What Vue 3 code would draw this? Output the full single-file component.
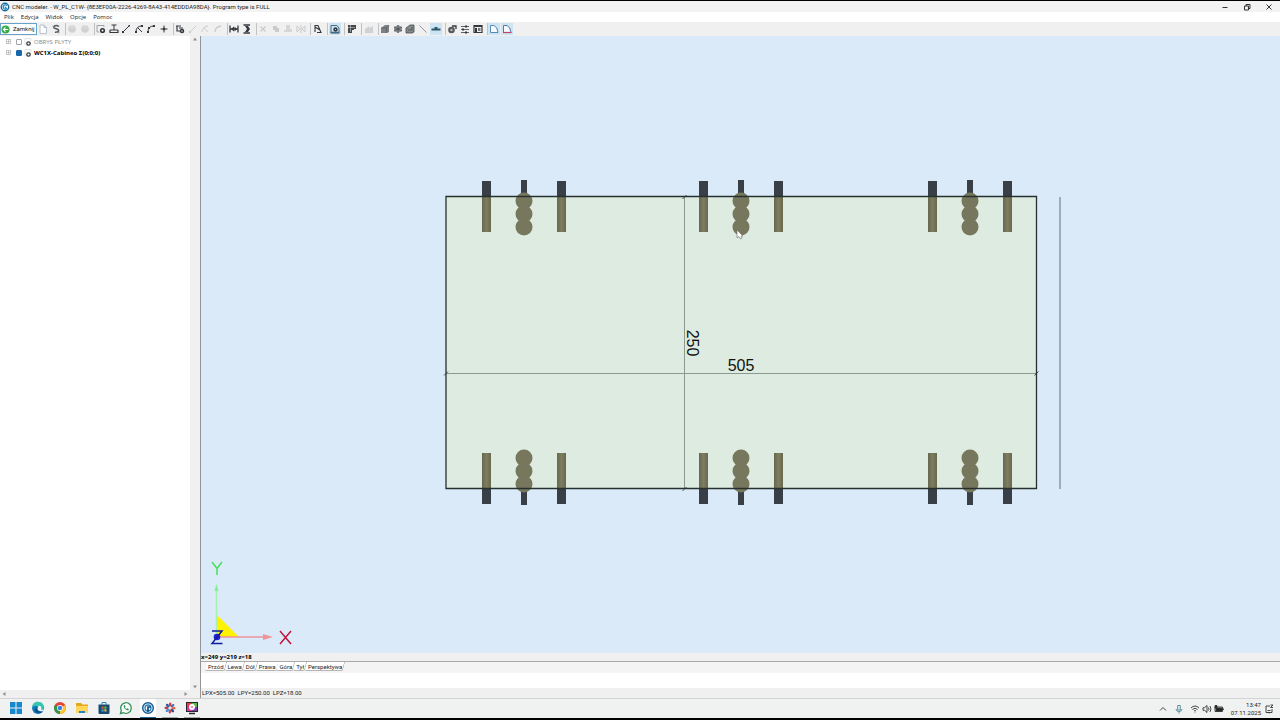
<script setup>
import { ref } from 'vue'

const menus = ['Plik', 'Edycja', 'Widok', 'Opcje', 'Pomoc']
const k = '#34383c'
const g = '#c9cbcc'
const line = (d, c = k, w = 1) => `<path d="${d}" fill="none" stroke="${c}" stroke-width="${w}"/>`
const fill = (d, c = k) => `<path d="${d}" fill="${c}"/>`
const gear = (x, y, r = 1.8) => `<circle cx="${x}" cy="${y}" r="${r}" fill="none" stroke="${k}" stroke-width="1.6"/>`
const solid = 'M2 5L6 2H10V9L8 10H2Z'

const groups = [
  [
    { name: 'Nowy', art: fill('M3 2H7L9.500 4.500V10.500H3Z', '#fcfdfe') + line('M3 2H7L9.500 4.500V10.500H3ZM7 2V4.500H9.500', '#a9b6c2', 0.8) },
    { name: 'Przelicz', art: line('M9 3.500C6 1.500 3 3 4 5L8 6.500C10 8 7 10 5 9', '#555b60', 1.5) + line('M2.500 3L5 5M6 9L9.500 10', '#888', 1) }
  ],
  [
    { name: 'Cofnij', art: '<circle cx="6" cy="6" r="3.800" fill="#cfd1d2"/><path d="M4 5Q6 2 8 5" fill="none" stroke="#e3e4e4"/>' },
    { name: 'Ponów', art: '<circle cx="6" cy="6" r="3.800" fill="#cfd1d2"/><path d="M4 5Q6 2 8 5" fill="none" stroke="#e3e4e4"/>' }
  ],
  [
    { name: 'Element', art: line('M2 9V2.500H9V4M2 9H4', '#8c9196', 0.8) + gear(7.5, 7.5) },
    { name: 'Wymiar', art: line('M3.500 2H8.500M6 2V7') + line('M2 7V9.500H10V7M2 7H10', k, 1.2) },
    { name: 'Linia', art: line('M3 9L9.500 2.500') + fill('M2 8H4V10H2ZM8.500 2H10V3.500H8.500Z') },
    { name: 'Łuk', art: line('M3 9Q3 3 9 3M5 5L9 9') + fill('M2 8H4V10H2ZM8 2H10V4H8Z') },
    { name: 'Zaokrąglenie', art: line('M3 9Q3 3 9 3') + fill('M2 8H4V10H2ZM8 2H10V4H8ZM3 4H5V6H3Z') },
    { name: 'Punkt', art: line('M6 2.500V9.500M2.500 6H9.500') + fill('M4.800 4.800H7.200V7.200H4.800Z') }
  ],
  [
    { name: 'Edytuj element', art: line('M2 3H7M3 3V8H6M5 5H9', k, 1.2) + gear(8, 8, 1.5) },
    { name: 'Edytuj linię', art: line('M3 9L9 3', g) + fill('M2 8H4V10H2Z', g) },
    { name: 'Edytuj łuk', art: line('M3 9Q3 4 9 3M5 5L9 9', g) },
    { name: 'Edytuj promień', art: line('M3 9Q3 4 9 3', g, 1.3) }
  ],
  [
    { name: 'Wymiar poziomy', art: line('M2 2.500V9.500M10 2.500V9.500M2 6H10', k, 1.3) + fill('M3 6L6 3.500V8.500ZM9 6L6.500 3.500V8.500Z') },
    { name: 'Wymiar pionowy', art: line('M2.500 2H9M2.500 10H9', k, 1.3) + fill('M4 3H7L9 6L7 9H4L6 6Z') }
  ],
  [
    { name: 'Usuń', art: line('M3.500 3.500L8.500 8.500M8.500 3.500L3.500 8.500', g, 1.2) },
    { name: 'Kopiuj', art: fill('M3 3H7V5H9V9H5V7H3Z', g) },
    { name: 'Wklej', art: fill('M4 2H8V6H10V9H2V7H4Z', '#d5d6d7') },
    { name: 'Odbij', art: line('M2 3V9L5 6ZM10 3V9L7 6ZM6 2V10', g) }
  ],
  [{ name: 'Obrót', art: line('M3 9V2.500H6L9 9.500H5M3 4L8 7', k, 1.1) }],
  [{ name: 'Zrzut', on: true, art: line('M2 10V2.500H8L10 5V10Z', '#486b87') + gear(6.5, 6.5, 1.4) + line('M1.500 9.500H10.500', '#486b87', 1.5) }],
  [{ name: 'Lista', art: fill('M2 2H10V6H8V7H6V10H2Z', '#44484b') + line('M2 4.500H9M4.500 2V9', '#c4c7c8', 0.6) }],
  [{ name: 'Blok', art: fill('M2 6L6 3V5L10 3V10H2Z', '#cfd1d2') }],
  [
    { name: 'Bryła', art: fill(solid, '#7d8286') + line('M2 5H7.500V10M7.500 5L10 2.500', '#5a5e62', 0.8) },
    { name: 'Siatka', art: fill('M2 4L6 2L10 4V8L6 10L2 8Z', '#8e9295') + line('M2 4L10 8M2 8L10 4M6 2V10', '#4a4e52', 0.8) },
    { name: 'Bryła i krawędzie', art: fill(solid, '#858a8d') + line('M2 5L6 2H10V9L8 10H2ZM4 7H8V4', '#45494c', 0.8) },
    { name: 'Odcinek', art: line('M2.500 2.500L9.500 9.500', '#8b8f92', 0.9) },
    { name: 'Przekrój', on: true, art: line('M1.500 6.500H10.500', '#31566c', 2) + fill('M4.500 4H7.500V7H4.500Z', '#31566c') }
  ],
  [
    { name: 'Widoczność', art: '<circle cx="5.500" cy="7" r="3.300" fill="#54585b"/><circle cx="5.500" cy="7" r="1.200" fill="#bbb"/>' + line('M6 3H10V6', k, 1.3) },
    { name: 'Ustawienia', art: line('M2 3.500H10M2 6.500H10M2 9.500H10', '#4e5255', 0.9) + fill('M6 2.500H8V4.500H6ZM3 5.500H5V7.500H3ZM6 8.500H8V10.500H6Z') },
    { name: 'Okno', art: line('M2 2.500H10V9.500H2Z', k, 1.2) + fill('M2 2H10V4H2ZM3 5H5V9H3Z') + fill('M6 5H8.500V8H6Z', '#777') }
  ],
  [
    { name: 'Profil', on: true, art: fill('M2.500 9.500V2.500H7L10 9.500Z', '#f4fafd') + line('M2.500 9.500V2.500H6Q9.500 4 10 9.500Z', '#5689b4') },
    { name: 'Profil bazowy', on: true, art: fill('M2.500 9.500V2.500H7L10 9.500Z', '#f4fafd') + line('M2.500 9.500V2.500H6Q9.500 4 10 9.500', '#5a7b9b') + line('M2 9.500H10.500', '#c04463', 1.2) }
  ]
]
const groupWidth = (n) => `${Math.ceil(n * 12.5)}px`

const tree = ref([
  { label: 'OBRYS PŁYTY', checked: false },
  { label: 'WC1X-Cabineo Σ(0;0;0)', checked: true }
])

const connectors = [524, 741, 970]
const views = ['Przód', 'Lewa', 'Dół', 'Prawa', 'Góra', 'Tył', 'Perspektywa']
const petals = Array.from({ length: 8 }, (_, i) => ({
  angle: i * 45,
  color: ['#d83b3b', '#3874bf', '#e0694f', '#2a4d89', '#d13e59', '#4a93cd', '#b73b4a', '#335b9d'][i]
}))
</script>

<template>
  <div class="app">
    <header class="titlebar">
      <svg class="logo" viewBox="0 0 12 12" aria-hidden="true">
        <circle cx="6" cy="6" r="4.500" fill="#e9f5fb" stroke="#1b6796" stroke-width="1.600" />
        <path d="M8.500 4.500A2.500 2.500 0 1 0 8 8L6 6" fill="none" stroke="#2b8dbf" stroke-width="1.500" />
      </svg>
      <h1>CNC modeler. - W_PL_C1W- {8E3EF00A-2226-4269-8A43-414EDDDA98DA}. Program type is FULL</h1>
      <div class="window-buttons">
        <button aria-label="Minimalizuj"><svg viewBox="0 0 10 10"><path d="M2.500 5.500H7.500" /></svg></button>
        <button aria-label="Przywróć"><svg viewBox="0 0 10 10"><path d="M2.500 4H6.500V8H2.500ZM4 4V2.500H8V6.500H6.500" /></svg></button>
        <button aria-label="Zamknij okno"><svg viewBox="0 0 10 10"><path d="M2.500 2.500L7.500 7.500M7.500 2.500L2.500 7.500" /></svg></button>
      </div>
    </header>

    <nav class="menubar">
      <button v-for="m in menus" :key="m">{{ m }}</button>
    </nav>

    <div class="toolbar">
      <button class="close-button">
        <svg viewBox="0 0 10 10" aria-hidden="true">
          <circle cx="5" cy="5" r="4.500" fill="#36a844" />
          <path d="M8 5H3M5 2.700L2.700 5L5 7.300" fill="none" stroke="#fff" stroke-width="1.300" />
        </svg>
        <span>Zamknij</span>
      </button>
      <div v-for="(group, i) in groups" :key="i" class="tool-group" :style="{ width: groupWidth(group.length) }">
        <button v-for="t in group" :key="t.name" :aria-label="t.name" :class="{ on: t.on }">
          <svg viewBox="0 0 12 12" v-html="t.art"></svg>
        </button>
      </div>
    </div>

    <main class="workspace">
      <aside class="side">
        <div class="side-body">
          <ul class="tree">
            <li v-for="(n, i) in tree" :key="i">
              <button class="expander" :aria-label="'Rozwiń ' + n.label">
                <svg viewBox="0 0 6 6"><path d="M.5 .5H5.500V5.500H.5ZM1.500 3H4.500M3 1.500V4.500" /></svg>
              </button>
              <label :class="{ dim: !n.checked }">
                <input v-model="n.checked" type="checkbox" />
                <svg class="node-icon" viewBox="0 0 10 10" aria-hidden="true">
                  <path d="M2 8V1.500H8V4" fill="none" stroke="#e1e3e5" />
                  <circle cx="5.500" cy="6.500" r="1.700" fill="none" stroke="#383c40" stroke-width="1.300" />
                </svg>
                <span>{{ n.label }}</span>
              </label>
            </li>
          </ul>
          <div class="vscroll">
            <svg viewBox="0 0 6 6"><path d="M1 4.500L3 1.500L5 4.500Z" /></svg>
            <svg viewBox="0 0 6 6"><path d="M1 1.500L3 4.500L5 1.500Z" /></svg>
          </div>
        </div>
        <div class="hscroll">
          <svg viewBox="0 0 6 6"><path d="M4.500 1L1.500 3L4.500 5Z" /></svg>
          <svg viewBox="0 0 6 6"><path d="M1.500 1L4.500 3L1.500 5Z" /></svg>
        </div>
      </aside>

      <section class="viewer">
        <div class="canvas">
          <svg viewBox="201 36 1079 617">
            <defs>
              <linearGradient id="dowel">
                <stop offset="0" stop-color="#66684f" />
                <stop offset=".5" stop-color="#7e7d60" />
                <stop offset="1" stop-color="#68684f" />
              </linearGradient>
              <g id="fitting">
                <path d="M-42 181h9v16h-9zM33 181h9v16h-9zM-3 180h6v17h-6z" fill="#393f47" />
                <rect x="-42" y="197" width="9" height="35" fill="url(#dowel)" />
                <rect x="33" y="197" width="9" height="35" fill="url(#dowel)" />
                <g fill="#77775e">
                  <circle cy="201" r="8.500" />
                  <circle cy="214" r="8.500" />
                  <circle cy="227" r="8.500" />
                </g>
              </g>
            </defs>
            <rect x="446" y="197" width="590.500" height="292" fill="#deebe0" />
            <g stroke="#8b9990" fill="none">
              <path d="M684.500 197V489M446 373.500H1036" />
              <path d="M682.500 199L686.500 195M682.500 491L686.500 487M444 375.500L448 371.500M1034.500 375.500L1038.500 371.500" stroke="#46504a" />
            </g>
            <g v-for="x in connectors" :key="x">
              <use href="#fitting" :transform="`translate(${x} 0)`" />
              <use href="#fitting" :transform="`translate(${x} 685) scale(1 -1)`" />
            </g>
            <path d="M446 196.500H1036.500V488.500H446Z" fill="none" stroke="#26312f" stroke-width="1.300" />
            <path d="M1060 197V489" stroke="#7e8b96" stroke-width="1.300" />
            <g font-size="16" fill="#111" text-anchor="middle">
              <text x="741" y="371">505</text>
              <text transform="translate(687 343) rotate(90)">250</text>
            </g>
            <path d="M737 230V238L739 236.500L740.500 239L742 238L741 236H743Z" fill="#fff" stroke="#777" stroke-width=".7" />
            <g stroke-width="1.500" fill="none">
              <path d="M217 615V637H239Z" fill="#fff200" />
              <path d="M216.500 637V588" stroke="#a8efb4" />
              <path d="M214.500 591L216.500 584L218.500 591Z" fill="#82ef93" />
              <path d="M217 637H265" stroke="#ee929c" />
              <path d="M263 634L273 637L263 640Z" fill="#f0939c" />
              <path d="M212 562L217 568.500L222 562M217 568.500V575" stroke="#46e057" />
              <path d="M280 631L291 644M291 631L280 644" stroke="#c0143c" />
              <circle cx="217" cy="637" r="3.300" fill="#2323d5" />
              <path d="M212 631H222L212 643.500H222.500" stroke="#101c9a" />
            </g>
          </svg>
        </div>
        <output class="coords">x=249 y=219 z=18</output>
        <nav class="views">
          <button v-for="v in views" :key="v">{{ v }}</button>
        </nav>
        <div class="blank"></div>
        <footer class="status"><span>LPX=505.00</span><span>LPY=250.00</span><span>LPZ=18.00</span></footer>
      </section>
    </main>

    <footer class="taskbar">
      <div class="apps">
        <button aria-label="Start"><svg viewBox="0 0 16 16"><path d="M2 2H7.500V7.500H2ZM8.500 2H14V7.500H8.500ZM2 8.500H7.500V14H2ZM8.500 8.500H14V14H8.500Z" fill="#1688cd" /></svg></button>
        <button aria-label="Edge">
          <svg viewBox="0 0 16 16">
            <circle cx="8" cy="8" r="6" fill="#1475b8" />
            <path d="M2 8C2 3 6 1 9 2C13 2 15 7 13 9H8C9 6 5 4 2 8Z" fill="#3ac5b2" />
            <path d="M7 8C7 12 11 12 13 11C10 15 4 13 5 9Z" fill="#0c4f91" />
            <path d="M7.500 8.500C9 6 8 5.500 10 6Q12 7 11 9.500H14L13 11Q8 12 7.500 8.500Z" fill="#eef7fa" />
          </svg>
        </button>
        <button aria-label="Chrome">
          <svg viewBox="0 0 16 16">
            <circle cx="8" cy="8" r="6" fill="#e54335" />
            <path d="M8 8L2.800 5A6 6 0 0 0 8 14L11 9Z" fill="#29974e" />
            <path d="M8 8L13.200 5A6 6 0 0 1 8 14Z" fill="#fac52d" />
            <circle cx="8" cy="8" r="2.900" fill="#fff" />
            <circle cx="8" cy="8" r="2.200" fill="#397ee0" />
          </svg>
        </button>
        <button aria-label="Pliki"><svg viewBox="0 0 16 16"><path d="M2 3H7L8.500 4.500H14V13H2Z" fill="#e2a91c" /><path d="M2 6H14V13H2Z" fill="#ffd65c" /><path d="M5 11H11V13H5Z" fill="#2484ca" /></svg></button>
        <button aria-label="Sklep">
          <svg viewBox="0 0 16 16">
            <path d="M6 4.500V2.500H10V4.500" fill="none" stroke="#2586c3" />
            <path d="M2.500 4.500H13.500V13Q13.500 14 12.500 14H3.500Q2.500 14 2.500 13Z" fill="#174a73" />
            <path d="M5.500 6.500H7.700V8.700H5.500Z" fill="#e55c3c" /><path d="M8.300 6.500H10.500V8.700H8.300Z" fill="#72b33d" />
            <path d="M5.500 9.300H7.700V11.500H5.500Z" fill="#35a1dc" /><path d="M8.300 9.300H10.500V11.500H8.300Z" fill="#eeb632" />
          </svg>
        </button>
        <button aria-label="WhatsApp">
          <svg viewBox="0 0 16 16">
            <path d="M2.500 13.500L3.300 10.500A5.300 5.300 0 1 1 5.500 12.700Z" fill="#f8fcf9" stroke="#32905a" stroke-width="1.300" />
            <path d="M5.700 5.500Q5.500 9.500 10.300 10.500L10.800 9L9.200 8.200L8.500 8.900Q7.200 8.300 6.900 7.200L7.500 6.600L6.900 5.100Z" fill="#32905a" />
          </svg>
        </button>
        <button class="current" aria-label="CNC modeler">
          <svg viewBox="0 0 16 16">
            <circle cx="8" cy="8" r="5.300" fill="#fff" stroke="#165d91" stroke-width="1.500" />
            <circle cx="8" cy="8" r="3" fill="none" stroke="#2685b8" stroke-width="1.300" />
            <path d="M8 12V7H11" fill="none" stroke="#164d80" stroke-width="1.700" />
          </svg>
        </button>
        <button class="running" aria-label="Projekt">
          <svg viewBox="0 0 16 16">
            <path v-for="p in petals" :key="p.angle" d="M8 7Q5.500 4.500 8 2.200Q11 3.500 8 7Z" :fill="p.color" :transform="`rotate(${p.angle} 8 8)`" />
          </svg>
        </button>
        <button class="running" aria-label="Nagrywanie">
          <svg viewBox="0 0 16 16">
            <path d="M2 2H14V12H2Z" fill="#272532" />
            <path d="M3 3H8V7H3Z" fill="#e93a45" /><path d="M8 3H13V7H8Z" fill="#55bd4b" />
            <path d="M8 7H13V11H8Z" fill="#7b3cac" /><path d="M3 7H8V11H3Z" fill="#e934a0" />
            <circle cx="8" cy="7" r="3" fill="#fff" /><circle cx="8" cy="7" r="1.300" fill="#ef93b5" />
            <path d="M5 13.500H11" stroke="#282831" stroke-width="1.500" />
          </svg>
        </button>
      </div>
      <div class="tray">
        <svg viewBox="0 0 12 12"><path d="M3 7.500L6 4.500L9 7.500" /></svg>
        <svg viewBox="0 0 12 12" class="mic"><path d="M4.700 2.500H7.300V7H4.700ZM3 6Q3 8.500 6 8.500Q9 8.500 9 6M6 8.500V10.500" /></svg>
        <div class="tray-set">
          <svg viewBox="0 0 12 12"><path d="M2 5Q6 1 10 5M3.500 6.500Q6 4 8.500 6.500M5 8Q6 7 7 8M6 9V9.500" /></svg>
          <svg viewBox="0 0 12 12"><path d="M2 4.700H3.500L6 2.500V9.500L3.500 7.300H2ZM7.500 4.500Q8.500 6 7.500 7.500M9 3Q11 6 9 9" /></svg>
          <svg viewBox="0 0 12 12"><path d="M2 4H9.500V8.500H2ZM10.500 5.500V7" /><path d="M3 5H9V8H3ZM2 2.500H4V5H2Z" fill="#222" /></svg>
        </div>
        <div class="clock">
          <time><span>13:47</span><span>07.11.2025</span></time>
          <svg viewBox="0 0 12 12"><path d="M7 3H3V9.500H9V6M4.500 7.500H7.500M7.500 2H10L7.500 4.500H10M6 9.500V10.500" /></svg>
        </div>
      </div>
    </footer>
  </div>
</template>

<style>
html,
body {
  height: 100%;
}
body {
  margin: 0;
}
#app {
  height: 100%;
}
</style>

<style scoped>
.app {
  box-sizing: border-box;
  height: 100%;
  display: flex;
  flex-direction: column;
  border-top: 1px solid #000;
  border-bottom: 2px solid #000;
  background: #f0f0f0;
  color: #222;
  font: 6px/10px "Open Sans", "Noto Sans", sans-serif;
  overflow: hidden;
}
button {
  margin: 0;
  padding: 0;
  border: 0;
  background: none;
  color: inherit;
  font: inherit;
}
svg {
  display: block;
  flex: none;
}
.titlebar {
  flex: none;
  display: flex;
  align-items: center;
  height: 11px;
  background: #f3f3f3;
}
.logo {
  width: 10px;
  height: 10px;
  margin: 0 2px 0 0;
}
h1 {
  flex: 1;
  margin: 0;
  font: 6px/10px Roboto, sans-serif;
  white-space: nowrap;
}
.window-buttons {
  display: flex;
}
.window-buttons button {
  width: 22px;
  display: flex;
  justify-content: center;
}
.window-buttons svg {
  width: 10px;
  height: 10px;
  fill: none;
  stroke: #333;
}
.menubar {
  flex: none;
  display: flex;
  gap: 7px;
  height: 10px;
  padding-left: 4px;
  background: #fff;
}
.toolbar {
  flex: none;
  display: flex;
  align-items: center;
  height: 14px;
  background: #f0f0f0;
}
.close-button {
  box-sizing: border-box;
  width: 37px;
  height: 12px;
  display: flex;
  align-items: center;
  gap: 3px;
  border: 1px solid #6aa3c9;
  background: #fbfdfe;
  font-family: Roboto, sans-serif;
}
.close-button svg {
  width: 9px;
  height: 9px;
}
.tool-group {
  display: flex;
  justify-content: space-around;
  padding-right: 3px;
  border-right: 1px solid #c2c2c2;
}
.tool-group:last-child {
  border: 0;
}
.tool-group svg {
  width: 12px;
  height: 12px;
}
.on {
  background: #cde4f3;
}
.workspace {
  flex: 1;
  min-height: 0;
  display: flex;
}
.side {
  flex: none;
  width: 200px;
  display: flex;
  flex-direction: column;
  border-right: 1px solid #92969a;
}
.side-body {
  flex: 1;
  display: flex;
}
.tree {
  flex: 1;
  margin: 0;
  padding: 0 0 0 6px;
  list-style: none;
  background: #fff;
  font-weight: bold;
}
.tree li,
.tree label {
  display: flex;
  align-items: center;
}
.tree li {
  height: 11px;
  gap: 5px;
}
.expander svg {
  width: 5px;
  height: 5px;
  fill: none;
  stroke: #a0a0a0;
  stroke-width: 0.8;
}
.tree input {
  appearance: none;
  box-sizing: border-box;
  width: 6px;
  height: 6px;
  margin: 0;
  border: 1px solid #a0a4a8;
  border-radius: 1px;
  background: #fff;
}
.tree input:checked {
  border-color: #1767ad;
  background: #1767ad;
}
.node-icon {
  width: 10px;
  height: 10px;
  margin: 0 1px;
}
.tree label {
  color: #000;
}
.tree label.dim {
  color: #888;
  font-weight: normal;
}
.vscroll,
.hscroll {
  flex: none;
  display: flex;
  justify-content: space-between;
  align-items: center;
  background: #f0f0f0;
}
.vscroll {
  width: 10px;
  flex-direction: column;
}
.hscroll {
  height: 8px;
  padding: 0 11px 0 1px;
}
.vscroll svg,
.hscroll svg {
  width: 6px;
  height: 6px;
  fill: #929292;
}
.viewer {
  flex: 1;
  min-width: 0;
  display: flex;
  flex-direction: column;
}
.canvas {
  flex: 1;
  min-height: 0;
  background: #daeaf8;
}
.canvas svg {
  width: 100%;
  height: 100%;
  font-family: "Liberation Sans", Arial, sans-serif;
}
.coords {
  flex: none;
  height: 8px;
  border-bottom: 1px solid #aaa;
  background: #f0f0f0;
  color: #000;
  font-weight: bold;
  line-height: 8px;
}
.views {
  flex: none;
  display: flex;
  height: 11px;
  padding-left: 5px;
  background: #f4f4f4;
}
.views button {
  position: relative;
  z-index: 0;
  height: 9px;
  padding: 0 2px;
  font-family: Roboto, sans-serif;
  line-height: 8px;
}
.views button::before {
  content: "";
  position: absolute;
  z-index: -1;
  inset: 0;
  border: 1px solid #b5b5b5;
  border-width: 0 1px 1px 0;
  border-radius: 0 0 2px 2px;
  background: #fff;
  transform: skewX(-15deg);
}
.blank {
  flex: none;
  height: 15px;
  background: #fff;
}
.status {
  flex: none;
  display: flex;
  gap: 3px;
  height: 10px;
  padding-left: 1px;
  font-family: Roboto, sans-serif;
}
.taskbar {
  flex: none;
  display: flex;
  justify-content: space-between;
  align-items: center;
  height: 19px;
  border-top: 1px solid #d4d4d4;
  background: #f0f1f1;
}
.apps {
  display: flex;
  gap: 6px;
  padding-left: 8px;
}
.apps button {
  width: 16px;
  height: 19px;
  border-bottom: 1px solid transparent;
}
.apps .current {
  background: #fff;
  border-bottom-color: #176792;
}
.apps .running {
  border-bottom-color: #aaa;
}
.apps svg {
  width: 16px;
  height: 16px;
}
.tray {
  display: flex;
  align-items: center;
  gap: 4px;
  padding-right: 5px;
}
.tray svg {
  width: 12px;
  height: 12px;
  fill: none;
  stroke: #333;
  stroke-width: 0.9;
}
.tray .mic {
  stroke: #4e8993;
}
.tray-set {
  display: flex;
}
.clock {
  display: flex;
  align-items: center;
  gap: 2px;
  padding-left: 2px;
}
time {
  display: flex;
  flex-direction: column;
  align-items: flex-end;
  font-family: Roboto, sans-serif;
  line-height: 8px;
}
</style>
